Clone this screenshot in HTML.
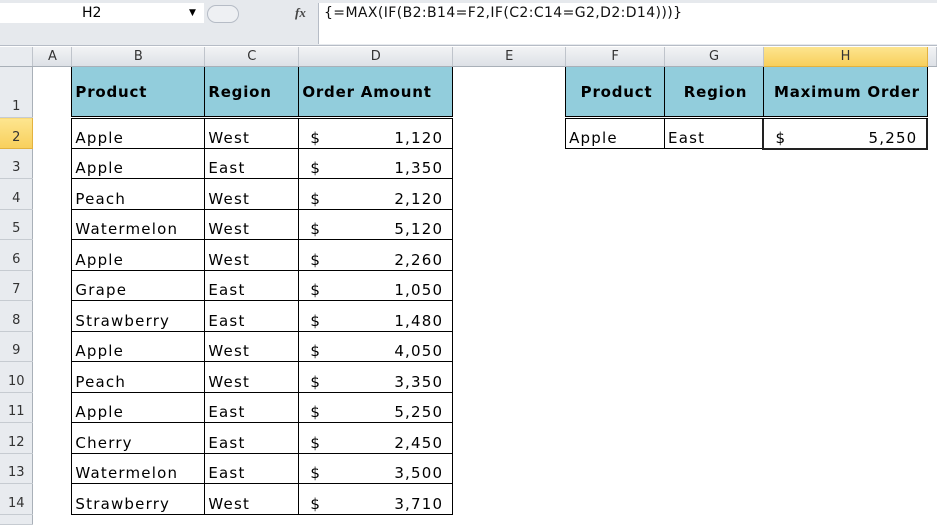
<!DOCTYPE html>
<html><head><meta charset="utf-8"><style>
body{margin:0;width:937px;height:519px;overflow:hidden;background:#fff;font-family:"DejaVu Sans","Liberation Sans",sans-serif;position:relative}
.top{position:absolute;left:0;top:0;width:937px;height:45px;background:#e6e9ed;border-bottom:1px solid #b6bcc6}
.nb{position:absolute;left:0;top:3px;width:204px;height:20px;background:#fff;font-size:14px;line-height:20px}
.fx{position:absolute;left:318px;top:3px;width:619px;height:41px;background:#fff;border-left:1px solid #b6bcc6;font-size:14px;line-height:20px;padding-left:5px;box-sizing:border-box;color:#111;letter-spacing:0.4px}
table{position:absolute;left:0;top:47px;border-collapse:collapse;table-layout:fixed}
td{padding:0;font-size:15px;letter-spacing:1.2px;color:#000;white-space:nowrap;overflow:hidden}
.ch{background:linear-gradient(#f2f3f5,#dde1e6);border-right:1px solid #bfc4cb;border-bottom:1px solid #a9b0b8;text-align:center;font-size:13px;letter-spacing:0;color:#333;height:19px}
.rh{background:#e8ebef;border-right:1px solid #a9b0b8;border-bottom:1px solid #c6cbd1;text-align:center;vertical-align:bottom;font-size:13px;letter-spacing:0;color:#333;padding-bottom:3px}
.sel{background:linear-gradient(#fde58f,#f8cf5c);border-color:#e3b23f}
.b{border:1px solid #000;padding-left:3px;vertical-align:bottom;padding-bottom:1px}
.h{background:#92cddc;font-weight:bold;letter-spacing:0.8px;vertical-align:middle;padding-bottom:0;border-bottom:3px double #000}
.c{text-align:center}
.r{text-align:right;padding-right:9px}
.d span{float:left;padding-left:8px}
</style></head><body>
<div class="top">
<div class="nb"><span style="position:absolute;left:82px">H2</span><span style="position:absolute;left:189px;font-size:9px">▼</span></div>
<div style="position:absolute;left:207px;top:5px;width:30px;height:16px;border:1px solid #b6bcc6;border-radius:9px;background:#eef0f3"></div>
<div style="position:absolute;left:295px;top:5px;font-style:italic;font-weight:bold;font-family:'Liberation Serif',serif;font-size:13px;color:#444">fx</div>
<div class="fx">{=MAX(IF(B2:B14=F2,IF(C2:C14=G2,D2:D14)))}</div>
</div>
<table>
<colgroup><col style="width:33px"><col style="width:39px"><col style="width:133px"><col style="width:94px"><col style="width:154px"><col style="width:113px"><col style="width:99px"><col style="width:99px"><col style="width:164px"><col style="width:9px"></colgroup>
<tr><td class="ch" style="background:#e8ebef"></td><td class="ch">A</td><td class="ch">B</td><td class="ch">C</td><td class="ch">D</td><td class="ch">E</td><td class="ch">F</td><td class="ch">G</td><td class="ch sel">H</td><td class="ch"></td></tr>
<tr style="height:51px"><td class="rh">1</td><td></td><td class="b h">Product</td><td class="b h">Region</td><td class="b h">Order Amount</td><td></td><td class="b h c">Product</td><td class="b h c">Region</td><td class="b h c">Maximum Order</td><td></td></tr>
<tr style="height:31px"><td class="rh sel">2</td><td></td><td class="b">Apple</td><td class="b">West</td><td class="b r d"><span>$</span>1,120</td><td></td><td class="b">Apple</td><td class="b">East</td><td class="b r d" style="border:2px solid #222"><span>$</span>5,250</td><td></td></tr>
<tr style="height:30px"><td class="rh">3</td><td></td><td class="b">Apple</td><td class="b">East</td><td class="b r d"><span>$</span>1,350</td><td colspan="5"></td></tr>
<tr style="height:31px"><td class="rh">4</td><td></td><td class="b">Peach</td><td class="b">West</td><td class="b r d"><span>$</span>2,120</td><td colspan="5"></td></tr>
<tr style="height:30px"><td class="rh">5</td><td></td><td class="b">Watermelon</td><td class="b">West</td><td class="b r d"><span>$</span>5,120</td><td colspan="5"></td></tr>
<tr style="height:31px"><td class="rh">6</td><td></td><td class="b">Apple</td><td class="b">West</td><td class="b r d"><span>$</span>2,260</td><td colspan="5"></td></tr>
<tr style="height:30px"><td class="rh">7</td><td></td><td class="b">Grape</td><td class="b">East</td><td class="b r d"><span>$</span>1,050</td><td colspan="5"></td></tr>
<tr style="height:31px"><td class="rh">8</td><td></td><td class="b">Strawberry</td><td class="b">East</td><td class="b r d"><span>$</span>1,480</td><td colspan="5"></td></tr>
<tr style="height:30px"><td class="rh">9</td><td></td><td class="b">Apple</td><td class="b">West</td><td class="b r d"><span>$</span>4,050</td><td colspan="5"></td></tr>
<tr style="height:31px"><td class="rh">10</td><td></td><td class="b">Peach</td><td class="b">West</td><td class="b r d"><span>$</span>3,350</td><td colspan="5"></td></tr>
<tr style="height:30px"><td class="rh">11</td><td></td><td class="b">Apple</td><td class="b">East</td><td class="b r d"><span>$</span>5,250</td><td colspan="5"></td></tr>
<tr style="height:31px"><td class="rh">12</td><td></td><td class="b">Cherry</td><td class="b">East</td><td class="b r d"><span>$</span>2,450</td><td colspan="5"></td></tr>
<tr style="height:30px"><td class="rh">13</td><td></td><td class="b">Watermelon</td><td class="b">East</td><td class="b r d"><span>$</span>3,500</td><td colspan="5"></td></tr>
<tr style="height:31px"><td class="rh">14</td><td></td><td class="b">Strawberry</td><td class="b">West</td><td class="b r d"><span>$</span>3,710</td><td colspan="5"></td></tr>
<tr style="height:10px"><td class="rh"></td><td colspan="9"></td></tr>
</table>
</body></html>
